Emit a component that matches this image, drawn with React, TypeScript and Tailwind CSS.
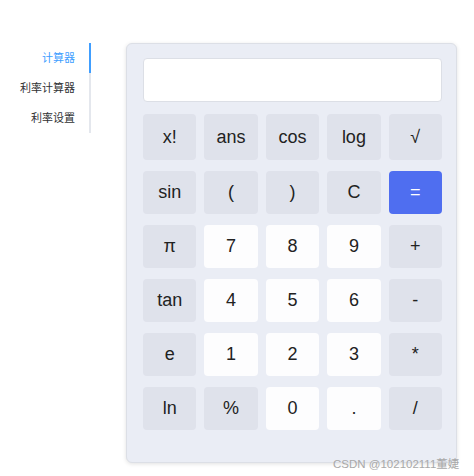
import React from "react";

type Btn = { label: string; kind: "gray" | "white" | "blue" };

const rows: Btn[][] = [
  [
    { label: "x!", kind: "gray" },
    { label: "ans", kind: "gray" },
    { label: "cos", kind: "gray" },
    { label: "log", kind: "gray" },
    { label: "√", kind: "gray" },
  ],
  [
    { label: "sin", kind: "gray" },
    { label: "(", kind: "gray" },
    { label: ")", kind: "gray" },
    { label: "C", kind: "gray" },
    { label: "=", kind: "blue" },
  ],
  [
    { label: "π", kind: "gray" },
    { label: "7", kind: "white" },
    { label: "8", kind: "white" },
    { label: "9", kind: "white" },
    { label: "+", kind: "gray" },
  ],
  [
    { label: "tan", kind: "gray" },
    { label: "4", kind: "white" },
    { label: "5", kind: "white" },
    { label: "6", kind: "white" },
    { label: "-", kind: "gray" },
  ],
  [
    { label: "e", kind: "gray" },
    { label: "1", kind: "white" },
    { label: "2", kind: "white" },
    { label: "3", kind: "white" },
    { label: "*", kind: "gray" },
  ],
  [
    { label: "ln", kind: "gray" },
    { label: "%", kind: "gray" },
    { label: "0", kind: "white" },
    { label: ".", kind: "white" },
    { label: "/", kind: "gray" },
  ],
];

const kindClass: Record<Btn["kind"], string> = {
  gray: "bg-[#dfe2eb] text-[#222222]",
  white: "bg-[#fdfdfe] text-[#222222]",
  blue: "bg-[#4f6ef0] text-white",
};

export default function App() {
  return (
    <div
      className="relative w-[474px] h-[476px] bg-white flex items-start overflow-hidden"
      style={{ fontFamily: '"Liberation Sans", Arial, "Noto Sans CJK SC", sans-serif' }}
    >
      {/* Sidebar tabs */}
      <div className="relative mt-[43px] w-[91px] border-r-2 border-[#e4e7ed] flex flex-col">
        <div className="h-[30px] flex items-center justify-end pr-[14px] text-[11px] text-[#409eff]">
          计算器
        </div>
        <div className="h-[30px] flex items-center justify-end pr-[14px] text-[11px] text-[#303133]">
          利率计算器
        </div>
        <div className="h-[30px] flex items-center justify-end pr-[14px] text-[11px] text-[#303133]">
          利率设置
        </div>
        <div className="absolute right-[-2px] top-0 w-[2px] h-[30px] bg-[#409eff]" />
      </div>

      {/* Calculator panel */}
      <div className="ml-[35px] mt-[43px] w-[331px] h-[420px] rounded-[6px] border border-[#dcdfe6] bg-[#eaedf5] shadow-[0_1px_4px_rgba(0,0,0,0.12)] pt-[14px] pl-[16px] pr-[14px] flex flex-col">
        <div className="h-[44px] w-[299px] bg-white rounded-[4px] border border-[#dcdfe6]" />
        <div className="mt-[12px] w-[299px] grid grid-cols-5 gap-x-[8px] gap-y-[11px] grid-rows-[46px_43px_43px_43px_43px_43px]">
          {rows.flat().map((b, i) => (
            <div
              key={i}
              className={`flex items-center justify-center rounded-[4px] text-[18px] ${kindClass[b.kind]}`}
            >
              {b.label}
            </div>
          ))}
        </div>
      </div>

      {/* Watermark */}
      <div className="absolute left-[333px] top-[456px] text-[11.5px] text-[#a8a8a8] whitespace-nowrap leading-[16px]">
        CSDN @102102111董婕
      </div>
    </div>
  );
}
